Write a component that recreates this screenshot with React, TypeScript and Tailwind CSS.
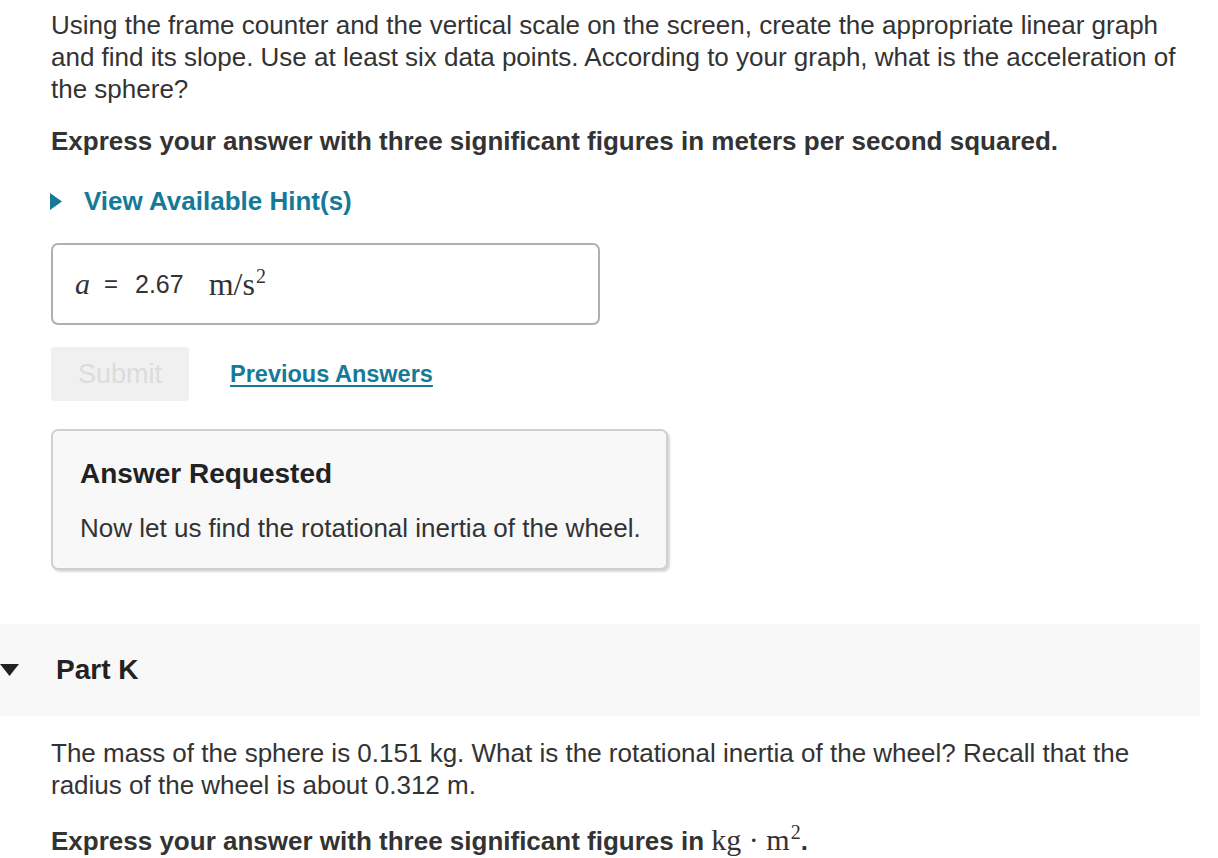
import React from 'react';

// --- Small math helpers ---
const MathSerif = ({ children, className = '' }: { children: React.ReactNode; className?: string }) => (
    <span className={`font-['Liberation_Serif','DejaVu_Serif',serif] ${className}`}>{children}</span>
);

const Sup = ({ children }: { children: React.ReactNode }) => (
    <span className="inline-block text-[20px] leading-none align-top relative top-[-2px] ml-[1px]">{children}</span>
);

export default function App() {
    return (
        <div className="w-[1200px] bg-white text-[#333] font-['Liberation_Sans',Arial,sans-serif] text-[26px] leading-[32px] pb-4">
            {/* Question body */}
            <div className="pl-[51px] pr-[20px] pt-[9px]">
                <p>
                    Using the frame counter and the vertical scale on the screen, create the appropriate linear graph
                    and find its slope. Use at least six data points. According to your graph, what is the acceleration of
                    the sphere?
                </p>
                <p className="mt-[20px] font-bold">
                    Express your answer with three significant figures in meters per second squared.
                </p>

                <div className="mt-[28px] flex items-center text-[#157a97] font-bold">
                    <svg width="13" height="17" viewBox="0 0 13 17" className="ml-[-1px]">
                        <path d="M0 0 L12 8.5 L0 17 Z" fill="#157a97" />
                    </svg>
                    <span className="ml-[21px]">View Available Hint(s)</span>
                </div>

                {/* Answer input */}
                <div className="mt-[26px] w-[549px] h-[82px] border-2 border-[#b0b0b0] rounded-[7px] flex items-center pl-[22px]">
                    <MathSerif className="italic text-[30px]">a</MathSerif>
                    <span className="ml-[14px] text-[24px]">=</span>
                    <span className="ml-[17px] text-[25px]">2.67</span>
                    <MathSerif className="ml-[25px] text-[32px] leading-[32px]">
                        m/s<Sup>2</Sup>
                    </MathSerif>
                </div>

                {/* Actions */}
                <div className="mt-[22px] flex items-center">
                    <button className="w-[138px] h-[54px] rounded-[4px] bg-[#f0f0f0] text-[#dcdcdc] text-[27px]">
                        Submit
                    </button>
                    <a className="ml-[41px] text-[#157a97] font-bold underline underline-offset-[3px] decoration-2 text-[23.5px]">
                        Previous Answers
                    </a>
                </div>

                {/* Answer requested notice */}
                <div className="mt-[28px] w-[617px] h-[141px] bg-[#f8f8f8] border-2 border-[#d0d0d0] rounded-[7px] shadow-[2px_2px_2px_rgba(0,0,0,0.15)] pl-[27px] pt-[27px]">
                    <h3 className="font-bold text-[28px] text-[#222]">Answer Requested</h3>
                    <p className="mt-[22px]">Now let us find the rotational inertia of the wheel.</p>
                </div>
            </div>

            {/* Part K header */}
            <div className="mt-[54px] h-[92px] bg-[#f8f8f8] flex items-center">
                <svg width="19" height="12" viewBox="0 0 19 12">
                    <path d="M0 0 L19 0 L9.5 12 Z" fill="#222" />
                </svg>
                <span className="ml-[37px] font-bold text-[28px] text-[#222]">Part K</span>
            </div>

            {/* Part K body */}
            <div className="pl-[51px] pr-[20px] pt-[21px]">
                <p>
                    The mass of the sphere is 0.151 kg. What is the rotational inertia of the wheel? Recall that the
                    radius of the wheel is about 0.312 m.
                </p>
                <p className="mt-[23px] font-bold">
                    Express your answer with three significant figures in{' '}
                    <MathSerif className="font-normal text-[30px]">
                        kg · m<Sup>2</Sup>
                    </MathSerif>
                    .
                </p>
            </div>
        </div>
    );
}
